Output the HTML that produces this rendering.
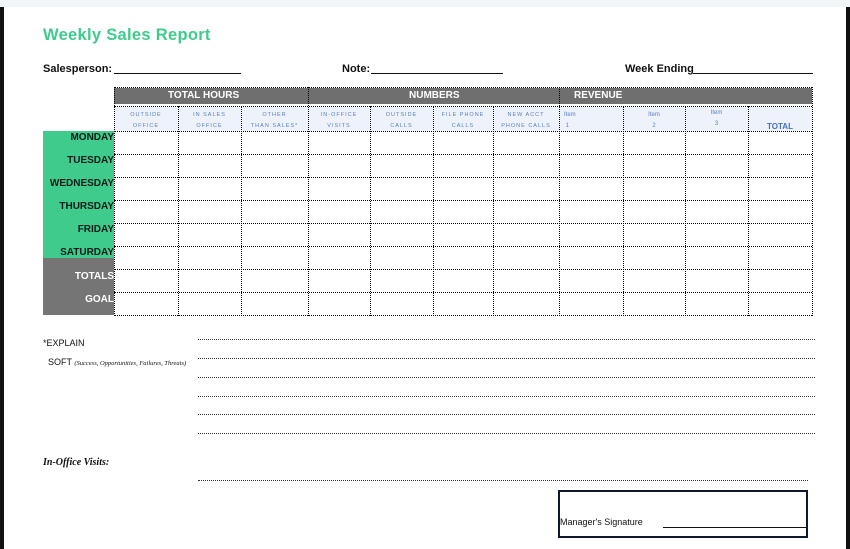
<!DOCTYPE html>
<html><head><meta charset="utf-8"><style>
*{margin:0;padding:0;box-sizing:border-box}
body{width:850px;height:549px;position:relative;background:#fff;font-family:"Liberation Sans",Arial,sans-serif;overflow:hidden}
.a{position:absolute}
.h{position:absolute;height:0;border-top:1px dotted #000}
.v{position:absolute;width:0;border-left:1px dotted #000}
.lbl{position:absolute;right:736px;font-size:10px;font-weight:bold;color:#0d1a1a;text-align:right;white-space:nowrap}
.sub{position:absolute;font-size:5.5px;color:#5a7ec6;text-align:center;letter-spacing:1px;line-height:11px}
.hd{position:absolute;color:#fff;font-weight:bold;font-size:10px;top:90px}
.ln{position:absolute;left:198px;width:617px;border-top:1px dotted #333;height:0}
</style></head><body>
<div class="a" style="left:0;top:0;width:850px;height:7px;background:#f2f5fa"></div>
<div class="a" style="left:0;top:7px;width:4px;height:542px;background:#111"></div>
<div class="a" style="left:846px;top:7px;width:4px;height:542px;background:#111"></div>
<div class="a" style="left:43px;top:26px;font-size:16.5px;font-weight:bold;color:#3ecb8c;letter-spacing:0.3px">Weekly Sales Report</div>
<div class="a" style="left:43px;top:63px;font-size:11px;font-weight:bold;color:#111">Salesperson:</div>
<div class="a" style="left:114px;top:73px;width:127px;border-top:1px solid #111"></div>
<div class="a" style="left:342px;top:63px;font-size:11px;font-weight:bold;color:#111">Note:</div>
<div class="a" style="left:371px;top:73px;width:132px;border-top:1px solid #111"></div>
<div class="a" style="left:625px;top:63px;font-size:11px;font-weight:bold;color:#111">Week Ending</div>
<div class="a" style="left:693px;top:73px;width:120px;border-top:1px solid #111"></div>

<div class="a" style="left:114px;top:88px;width:698px;height:16px;background:#6f6f6f"></div>
<div class="a" style="left:114px;top:107px;width:698px;height:24px;background:#eef2fa"></div>
<div class="a" style="left:43px;top:131px;width:71px;height:127px;background:#3ecb8c"></div>
<div class="a" style="left:43px;top:258px;width:71px;height:57px;background:#757575"></div>

<div class="hd" style="left:168px">TOTAL HOURS</div>
<div class="hd" style="left:409px">NUMBERS</div>
<div class="hd" style="left:574px">REVENUE</div>

<div class="h" style="left:114px;top:87px;width:698px"></div>
<div class="h" style="left:114px;top:106px;width:698px"></div>
<div class="h" style="left:114px;top:131px;width:698px"></div>
<div class="h" style="left:114px;top:154px;width:698px"></div>
<div class="h" style="left:114px;top:177px;width:698px"></div>
<div class="h" style="left:114px;top:200px;width:698px"></div>
<div class="h" style="left:114px;top:223px;width:698px"></div>
<div class="h" style="left:114px;top:246px;width:698px"></div>
<div class="h" style="left:114px;top:269px;width:698px"></div>
<div class="h" style="left:114px;top:292px;width:698px"></div>
<div class="h" style="left:114px;top:315px;width:698px"></div>

<div class="v" style="left:114px;top:87px;height:229px"></div>
<div class="v" style="left:178px;top:106px;height:210px"></div>
<div class="v" style="left:241px;top:106px;height:210px"></div>
<div class="v" style="left:308px;top:87px;height:229px"></div>
<div class="v" style="left:370px;top:106px;height:210px"></div>
<div class="v" style="left:433px;top:106px;height:210px"></div>
<div class="v" style="left:493px;top:106px;height:210px"></div>
<div class="v" style="left:559px;top:87px;height:229px"></div>
<div class="v" style="left:623px;top:106px;height:210px"></div>
<div class="v" style="left:685px;top:106px;height:210px"></div>
<div class="v" style="left:748px;top:106px;height:210px"></div>
<div class="v" style="left:812px;top:87px;height:229px"></div>

<div class="sub" style="left:114px;width:64px;top:110px">OUTSIDE<br>OFFICE</div>
<div class="sub" style="left:178px;width:63px;top:110px">IN SALES<br>OFFICE</div>
<div class="sub" style="left:241px;width:67px;top:110px">OTHER<br>THAN SALES*</div>
<div class="sub" style="left:308px;width:62px;top:110px">IN-OFFICE<br>VISITS</div>
<div class="sub" style="left:370px;width:63px;top:110px">OUTSIDE<br>CALLS</div>
<div class="sub" style="left:433px;width:60px;top:110px">FILE PHONE<br>CALLS</div>
<div class="sub" style="left:493px;width:66px;top:110px">NEW ACCT<br>PHONE CALLS</div>
<div class="sub" style="left:564px;top:110px;text-align:left;font-size:6px;letter-spacing:0">Item<br>&nbsp;1</div>
<div class="sub" style="left:623px;width:62px;top:110px;font-size:6px;letter-spacing:0">Item<br>2</div>
<div class="sub" style="left:685px;width:63px;top:108px;font-size:6px;letter-spacing:0">Item<br>3</div>
<div class="a" style="left:748px;width:64px;top:122px;text-align:center;font-size:8px;font-weight:bold;color:#4a6fc0">TOTAL</div>

<div class="lbl" style="top:132px">MONDAY</div>
<div class="lbl" style="top:155px">TUESDAY</div>
<div class="lbl" style="top:178px">WEDNESDAY</div>
<div class="lbl" style="top:201px">THURSDAY</div>
<div class="lbl" style="top:224px">FRIDAY</div>
<div class="lbl" style="top:247px">SATURDAY</div>
<div class="lbl" style="top:271px;color:#fff">TOTALS</div>
<div class="lbl" style="top:294px;color:#fff">GOAL</div>

<div class="a" style="left:43px;top:338px;font-size:9px;color:#111">*EXPLAIN</div>
<div class="a" style="left:48px;top:357px;font-size:9px;color:#111;white-space:nowrap">SOFT <i style="font-family:'Liberation Serif',serif;font-size:6.5px">(Success, Opportunities, Failures, Threats)</i></div>
<div class="ln" style="top:339px"></div>
<div class="ln" style="top:358px"></div>
<div class="ln" style="top:377px"></div>
<div class="ln" style="top:396px"></div>
<div class="ln" style="top:414px"></div>
<div class="ln" style="top:433px"></div>
<div class="a" style="left:43px;top:457px;font-family:'Liberation Serif',serif;font-style:italic;font-weight:bold;font-size:10px;color:#111">In-Office Visits:</div>
<div class="ln" style="top:480px;width:610px"></div>

<div class="a" style="left:558px;top:490px;width:250px;height:48px;border:2px solid #101830"></div>
<div class="a" style="left:560px;top:517px;font-size:9px;color:#111">Manager's Signature</div>
<div class="a" style="left:663px;top:527px;width:143px;border-top:1px solid #111"></div>
</body></html>
